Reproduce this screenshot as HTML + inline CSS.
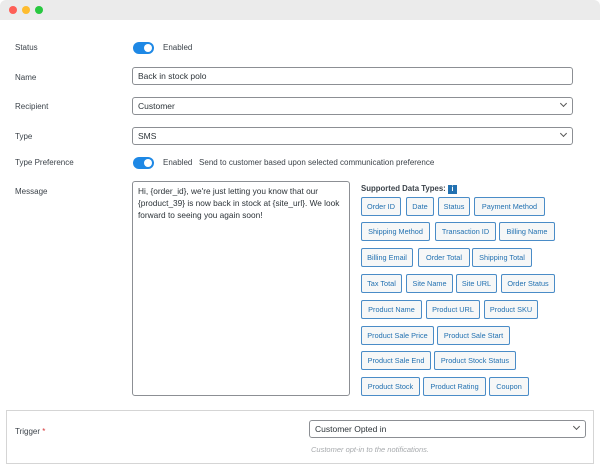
<!DOCTYPE html>
<html><head><meta charset="utf-8"><style>
*{box-sizing:border-box;margin:0;padding:0}
body{width:600px;height:471px;background:#fff;font-family:"Liberation Sans",sans-serif;font-size:8px;color:#3c434a;position:relative;overflow:hidden}
.bar{position:absolute;left:0;top:0;width:600px;height:20px;background:#ebebeb;border-radius:6px 6px 0 0}
.dot{position:absolute;top:6px;width:8px;height:8px;border-radius:50%}
.lbl{position:absolute;left:15px}
.abs{position:absolute}
.tog{position:absolute;left:133px;width:21px;height:12px;border-radius:6px;background:#1e88e5}
.tog:after{content:"";position:absolute;right:2px;top:2px;width:8px;height:8px;border-radius:50%;background:#fff}
.inp{position:absolute;left:132px;width:441px;height:18px;border:1px solid #8c8f94;border-radius:3px;padding:3px 5px;font-size:8.5px;color:#2c3338}
.chev{position:absolute;right:6px;top:3px;width:5px;height:5px;border-right:1px solid #555;border-bottom:1px solid #555;transform:rotate(45deg)}
.ta{position:absolute;left:132px;top:181px;width:218px;height:215px;border:1px solid #8c8f94;border-radius:3px;padding:3px 5px;font-size:8.3px;line-height:12px;color:#2c3338}
.b{position:absolute;height:19px;border:1px solid #4a8cc7;background:#f6f7f7;color:#2271b1;border-radius:2px;line-height:17px;font-size:7.3px;white-space:nowrap;text-align:center;overflow:hidden}
</style></head><body>
<div class="bar"><div class="dot" style="left:9px;background:#fe5f57"></div><div class="dot" style="left:22px;background:#febc2e"></div><div class="dot" style="left:35px;background:#28c840"></div></div>
<div class="lbl" style="top:43px">Status</div>
<div class="tog" style="top:42px"></div><div class="abs" style="left:163px;top:43px">Enabled</div>
<div class="lbl" style="top:73px">Name</div>
<div class="inp" style="top:67px">Back in stock polo</div>
<div class="lbl" style="top:102px">Recipient</div>
<div class="inp" style="top:97px">Customer<div class="chev"></div></div>
<div class="lbl" style="top:132px">Type</div>
<div class="inp" style="top:127px">SMS<div class="chev"></div></div>
<div class="lbl" style="top:158px">Type Preference</div>
<div class="tog" style="top:157px"></div><div class="abs" style="left:163px;top:158px">Enabled &nbsp; Send to customer based upon selected communication preference</div>
<div class="lbl" style="top:187px">Message</div>
<div class="ta">Hi, {order_id}, we're just letting you know that our {product_39} is now back in stock at {site_url}. We look forward to seeing you again soon!</div>
<div class="abs" style="left:361px;top:184px;font-weight:bold;font-size:7.8px">Supported Data Types: <span style="display:inline-block;width:9px;height:9px;background:#2271b1;color:#fff;text-align:center;line-height:9px;font-size:7px">i</span></div>

<span class="b" style="left:361px;top:197px;width:40px">Order ID</span>
<span class="b" style="left:406px;top:197px;width:28px">Date</span>
<span class="b" style="left:438px;top:197px;width:32px">Status</span>
<span class="b" style="left:474px;top:197px;width:71px">Payment Method</span>

<span class="b" style="left:361px;top:222px;width:69px">Shipping Method</span>
<span class="b" style="left:435px;top:222px;width:61px">Transaction ID</span>
<span class="b" style="left:499px;top:222px;width:56px">Billing Name</span>

<span class="b" style="left:361px;top:248px;width:52px">Billing Email</span>
<span class="b" style="left:418px;top:248px;width:52px">Order Total</span>
<span class="b" style="left:472px;top:248px;width:60px">Shipping Total</span>

<span class="b" style="left:361px;top:274px;width:41px">Tax Total</span>
<span class="b" style="left:406px;top:274px;width:47px">Site Name</span>
<span class="b" style="left:456px;top:274px;width:41px">Site URL</span>
<span class="b" style="left:501px;top:274px;width:54px">Order Status</span>

<span class="b" style="left:361px;top:300px;width:61px">Product Name</span>
<span class="b" style="left:426px;top:300px;width:54px">Product URL</span>
<span class="b" style="left:484px;top:300px;width:54px">Product SKU</span>

<span class="b" style="left:361px;top:326px;width:73px">Product Sale Price</span>
<span class="b" style="left:437px;top:326px;width:73px">Product Sale Start</span>

<span class="b" style="left:361px;top:351px;width:70px">Product Sale End</span>
<span class="b" style="left:434px;top:351px;width:82px">Product Stock Status</span>

<span class="b" style="left:361px;top:377px;width:59px">Product Stock</span>
<span class="b" style="left:423px;top:377px;width:63px">Product Rating</span>
<span class="b" style="left:489px;top:377px;width:40px">Coupon</span>

<div class="abs" style="left:6px;top:410px;width:588px;height:54px;border:1px solid #d5d5d5"></div>
<div class="lbl" style="top:427px">Trigger <span style="color:#d63638">*</span></div>
<div class="inp" style="left:309px;top:420px;width:277px">Customer Opted in<div class="chev"></div></div>
<div class="abs" style="left:311px;top:445px;font-style:italic;color:#a7aaad;font-size:7.5px">Customer opt-in to the notifications.</div>
</body></html>
